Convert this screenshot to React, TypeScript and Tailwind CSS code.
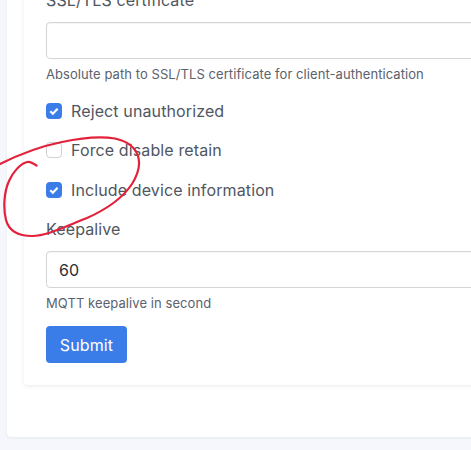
const inputClass =
  'block h-[37px] w-[560px] rounded-[4px] border border-[#d2d4d6] bg-white px-[12px] text-[16px] text-[#2a2d33] shadow-[inset_0_1px_1px_rgba(0,0,0,0.04)]';

function Check({ label, checked }: { label: string; checked?: boolean }) {
  return (
    <div className="flex h-[20px] items-center gap-[9px]">
      {checked ? (
        <span className="flex h-[16px] w-[16px] items-center justify-center rounded-[4px] bg-[#3b7de8]">
          <svg viewBox="0 0 16 16" className="h-[16px] w-[16px]" fill="none" stroke="white" strokeWidth="2.2">
            <path d="M4.3 8.3l2.5 2.4 4.8-5" />
          </svg>
        </span>
      ) : (
        <span className="h-[16px] w-[16px] rounded-[4px] border border-[#cfd1d4] bg-white" />
      )}
      <span className="text-[16px] tracking-[0.12px] text-[#4f5661]">{label}</span>
    </div>
  );
}

export default function App() {
  return (
    <div
      className="relative h-[450px] w-[471px] overflow-hidden bg-[#f5f7fc] pl-[7px] font-['Inter',sans-serif]"
    >
      <div className="-mt-[60px] h-[497px] w-[600px] rounded-[4px] bg-white pl-[17px] pt-[1px] shadow-[0_1px_3px_rgba(40,50,80,0.08)]">
        <div className="h-[444px] w-[560px] rounded-[4px] bg-white pl-[22px] shadow-[0_1px_4px_rgba(40,50,80,0.1)]">
          <div className="pt-[49px]">
            <label className="block text-[16px] leading-[20px] tracking-[0.12px] text-[#4f5661]">SSL/TLS certificate</label>
            <input className={`${inputClass} mt-[12px]`} readOnly />
            <p className="mt-[6px] text-[13px] leading-[18px] tracking-[0.07px] text-[#5b626c]">
              Absolute path to SSL/TLS certificate for client-authentication
            </p>
            <div className="mt-[17.6px] flex flex-col gap-[19.7px]">
              <Check label="Reject unauthorized" checked />
              <Check label="Force disable retain" />
              <Check label="Include device information" checked />
            </div>
            <label className="mt-[19.1px] block text-[16px] leading-[20px] tracking-[0.12px] text-[#4f5661]">Keepalive</label>
            <input className={`${inputClass} mt-[12px]`} defaultValue="60" readOnly />
            <p className="mt-[6px] text-[13px] leading-[18px] tracking-[0.07px] text-[#5b626c]">MQTT keepalive in second</p>
            <button className="mt-[13.9px] h-[37px] w-[81px] rounded-[4px] bg-[#3b7de8] pt-[1px] text-[16px] tracking-[0.12px] text-white">
              Submit
            </button>
          </div>
        </div>
      </div>

      <svg viewBox="0 0 471 450" className="pointer-events-none absolute left-0 top-0 h-[450px] w-[471px]" fill="none">
        <path
          d="M36.5 165.5C33 163 30 161 27 162C20 164 13 172 9 181C4 192 3 208 6 220C9 231 18 236 32 236C46 236 62 228 87 218C105 210 122 199 132 184C138 174 141 165 138 156C135 147 126 141 115 138.5C103 136.5 85 137 62 142C42 146 18 155 0 164"
          stroke="#e3213a"
          strokeWidth="2.2"
          strokeLinecap="round"
        />
      </svg>
    </div>
  );
}
